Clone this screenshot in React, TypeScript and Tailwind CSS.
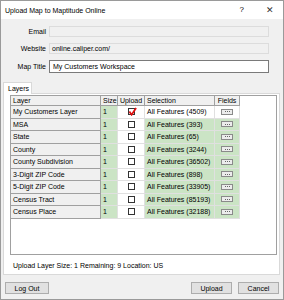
const font = { fontFamily: '"Liberation Sans", Arial, sans-serif' };

type Row = { name: string; count: string; checked?: boolean };

const rows: Row[] = [
  { name: 'My Customers Layer', count: '4509', checked: true },
  { name: 'MSA', count: '393' },
  { name: 'State', count: '65' },
  { name: 'County', count: '3244' },
  { name: 'County Subdivision', count: '36502' },
  { name: '3-Digit ZIP Code', count: '898' },
  { name: '5-Digit ZIP Code', count: '33905' },
  { name: 'Census Tract', count: '85193' },
  { name: 'Census Place', count: '32188' },
];

function Checkbox({ checked }: { checked?: boolean }) {
  return (
    <div className="w-[7px] h-[7px] border border-[#333] bg-white relative">
      {checked && (
        <svg viewBox="0 0 10 10" className="absolute -left-[1px] -top-[2px] w-[9px] h-[9px]">
          <path d="M1.5 5 L4 8.5 L9 1" fill="none" stroke="#e01010" strokeWidth="2" />
        </svg>
      )}
    </div>
  );
}

function DotsButton() {
  return (
    <div className="w-[12px] h-[6px] border border-[#8a8a8a] bg-[#ececec] flex items-center justify-center gap-[1px]">
      <div className="w-[1px] h-[1px] bg-[#666]" />
      <div className="w-[1px] h-[1px] bg-[#666]" />
      <div className="w-[1px] h-[1px] bg-[#666]" />
    </div>
  );
}

export default function App() {
  return (
    <div
      className="w-[284px] h-[300px] bg-[#f0f0f0] border border-[#9a9a9a] text-[7px] leading-none text-black flex flex-col overflow-hidden"
      style={font}
    >
      {/* Title bar */}
      <div className="h-[18px] bg-white flex items-center pl-[4px] shrink-0">
        <span className="text-[7px]">Upload Map to Maptitude Online</span>
        <span className="ml-auto text-[8px] mr-[22px]">?</span>
        <span className="text-[9px] mr-[9px] text-[#333]">✕</span>
      </div>

      {/* Form */}
      <div className="mt-[7px] flex flex-col gap-[6px]">
        <div className="flex items-center h-[11px]">
          <div className="w-[48px] text-right pr-[3px]">Email</div>
          <div className="w-[220px] h-[11px] bg-[#f0f0f0] border border-[#dcdcdc]" />
        </div>
        <div className="flex items-center h-[11px]">
          <div className="w-[48px] text-right pr-[3px]">Website</div>
          <div className="w-[220px] h-[11px] bg-[#f0f0f0] border border-[#dcdcdc] flex items-center pl-[2px]">
            online.caliper.com/
          </div>
        </div>
        <div className="flex items-center h-[13px]">
          <div className="w-[48px] text-right pr-[3px]">Map Title</div>
          <div className="w-[220px] h-[13px] bg-white border border-[#7a7a7a] flex items-center pl-[3px]">
            My Customers Workspace
          </div>
        </div>
      </div>

      {/* Tabs */}
      <div className="mt-[9px] ml-[2px] flex">
        <div className="h-[12px] w-[29px] bg-white border border-b-0 border-[#d9d9d9] flex items-center pl-[4px] relative z-10">
          Layers
        </div>
      </div>
      <div className="-mt-px ml-[2px] w-[277px] h-[182px] bg-white border border-[#d9d9d9] flex flex-col pt-[1px] pl-[6px]">
        {/* Grid */}
        <div className="w-[267px] h-[160px] border border-[#a0a0a0] bg-white flex flex-col">
          <div className="flex h-[10px]">
            <div className="w-[90px] bg-[#f0f0f0] border-r border-b border-[#a0a0a0] flex items-center pl-[2px]">Layer</div>
            <div className="w-[17px] bg-[#f0f0f0] border-r border-b border-[#a0a0a0] flex items-center pl-[2px]">Size</div>
            <div className="w-[27px] bg-[#f0f0f0] border-r border-b border-[#a0a0a0] flex items-center justify-center">Upload</div>
            <div className="w-[70px] bg-[#f0f0f0] border-r border-b border-[#a0a0a0] flex items-center pl-[2px]">Selection</div>
            <div className="w-[25px] bg-[#f0f0f0] border-r border-b border-[#a0a0a0] flex items-center justify-center">Fields</div>
          </div>
          {rows.map((r, i) => {
            const green = i === 0 ? 'bg-white' : 'bg-[#cbe4c5]';
            return (
              <div key={r.name} className="flex h-[12.5px]">
                <div className="w-[90px] bg-[#f0f0f0] border-r border-b border-[#a0a0a0] flex items-center pl-[2px]">
                  {r.name}
                </div>
                <div className="w-[17px] bg-[#cbe4c5] border-r border-b border-[#e0e0e0] flex items-center pl-[2px]">1</div>
                <div className="w-[27px] bg-white border-r border-b border-[#e0e0e0] flex items-center justify-center">
                  <Checkbox checked={r.checked} />
                </div>
                <div className={`w-[70px] ${green} border-r border-b border-[#e0e0e0] flex items-center pl-[2px]`}>
                  All Features ({r.count})
                </div>
                <div className={`w-[25px] ${green} border-r border-b border-[#e0e0e0] flex items-center justify-center`}>
                  <DotsButton />
                </div>
              </div>
            );
          })}
        </div>
        <div className="mt-[7px] ml-[3px]">Upload Layer Size: 1 Remaining: 9 Location: US</div>
      </div>

      {/* Buttons */}
      <div className="mt-[7px] flex px-[4px]">
        <button className="w-[44px] h-[12px] bg-[#e1e1e1] border border-[#adadad] text-[7px] leading-none">Log Out</button>
        <button className="ml-auto w-[41px] h-[12px] bg-[#e1e1e1] border border-[#adadad] text-[7px] leading-none">Upload</button>
        <button className="ml-[6px] w-[41px] h-[12px] bg-[#e1e1e1] border border-[#adadad] text-[7px] leading-none">Cancel</button>
      </div>
    </div>
  );
}
